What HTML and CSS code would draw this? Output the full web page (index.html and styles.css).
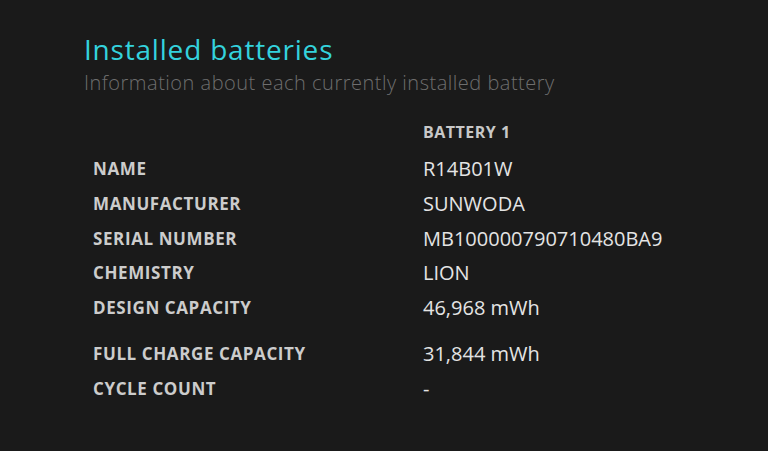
FILE: index.html
```html
<!DOCTYPE html>
<html lang="en">
<head>
    <meta charset="UTF-8">
    <meta name="viewport" content="width=device-width, initial-scale=1.0">
    <title>Battery report</title>
    <link rel="stylesheet" href="styles.css">
</head>
<body>
    <div class="section">
        <h2 class="title">Installed batteries</h2>
        <div class="subtitle">Information about each currently installed battery</div>

        <table class="info">
            <thead>
                <tr>
                    <td></td>
                    <th>BATTERY 1</th>
                </tr>
            </thead>
            <tbody>
                <tr><td class="label">NAME</td><td class="value">R14B01W</td></tr>
                <tr><td class="label">MANUFACTURER</td><td class="value">SUNWODA</td></tr>
                <tr><td class="label">SERIAL NUMBER</td><td class="value">MB100000790710480BA9</td></tr>
                <tr><td class="label">CHEMISTRY</td><td class="value">LION</td></tr>
                <tr class="spaced"><td class="label">DESIGN CAPACITY</td><td class="value">46,968 mWh</td></tr>
                <tr><td class="label">FULL CHARGE CAPACITY</td><td class="value">31,844 mWh</td></tr>
                <tr><td class="label">CYCLE COUNT</td><td class="value">-</td></tr>
            </tbody>
        </table>
    </div>
</body>
</html>
```

FILE: styles.css
```css
body {
    font-family: "Open Sans", "Noto Sans", sans-serif;
    background-color: #1a1a1a;
    margin: 0;
    padding: 0;
}

.section {
    padding: 31px 0 0 84px;
}

.title {
    margin: 0;
    font-size: 28px;
    font-weight: 400;
    color: #34d2dd;
    letter-spacing: 0.8px;
    line-height: 36px;
}

.subtitle {
    font-size: 20px;
    font-weight: 300;
    color: #6e6e6e;
    letter-spacing: 0.5px;
    line-height: 31px;
}

.info {
    margin: 19px 0 0 9px;
    border-collapse: collapse;
}

.info th {
    text-align: left;
    font-size: 16px;
    font-weight: 700;
    color: #c8c8c8;
    letter-spacing: 0.5px;
    padding: 0 0 5px 0;
    line-height: 24px;
}

.info td {
    padding: 0;
    height: 34.6px;
    vertical-align: middle;
}

.label {
    width: 330px;
    font-size: 17px;
    font-weight: 700;
    color: #cccccc;
    letter-spacing: 0.6px;
}

.value {
    font-size: 20px;
    font-weight: 400;
    color: #e4e4e4;
    letter-spacing: 0;
}

.spaced td {
    padding-bottom: 12px;
}
```
